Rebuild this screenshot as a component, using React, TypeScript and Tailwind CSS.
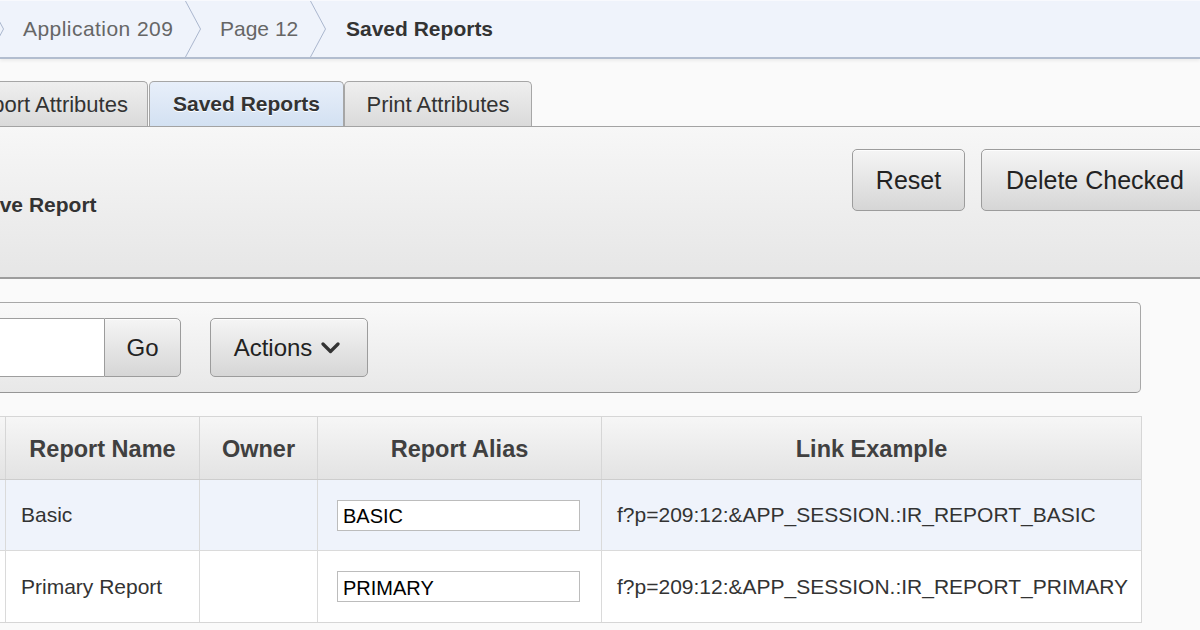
import React from 'react';

const Chevron = ({ className = '' }: { className?: string }) => (
  <svg className={className} width="16" height="57" viewBox="0 0 16 57" preserveAspectRatio="none" fill="none">
    <path d="M0.5 0 L15.5 28.5 L0.5 57" stroke="#a9b5cc" strokeWidth="1" />
  </svg>
);

const btn =
  'border border-[#9c9c9c] bg-linear-to-b from-[#f5f5f5] to-[#d6d6d6] text-[#222] shadow-[inset_0_1px_0_rgba(255,255,255,0.8)] flex items-center justify-center';

const rows = [
  { name: 'Basic', alias: 'BASIC', link: 'f?p=209:12:&APP_SESSION.:IR_REPORT_BASIC', bg: 'bg-[#eff3fb]' },
  { name: 'Primary Report', alias: 'PRIMARY', link: 'f?p=209:12:&APP_SESSION.:IR_REPORT_PRIMARY', bg: 'bg-white' },
];

export default function App() {
  return (
    <div className="w-[1200px] h-[630px] overflow-hidden bg-[#fafafa] font-['Liberation_Sans',Arial,sans-serif]">
      {/* Breadcrumb */}
      <div className="h-[59px] bg-[#eff3fb] border-t border-t-[#f8f9fd] border-b-2 border-b-[#b2bdcf] flex items-stretch shadow-[0_2px_3px_rgba(0,0,0,0.06)]">
        <Chevron className="ml-[-12px] shrink-0 h-full" />
        <div className="w-[181px] shrink-0 pl-[19px] flex items-center text-[21px] tracking-[0.45px] text-[#666]">Application 209</div>
        <Chevron className="shrink-0 h-full" />
        <div className="w-[109px] shrink-0 pl-[19px] flex items-center text-[21px] text-[#666]">Page 12</div>
        <Chevron className="shrink-0 h-full" />
        <div className="pl-[20px] flex items-center text-[21px] font-bold text-[#333]">Saved Reports</div>
      </div>

      {/* Tabs */}
      <div className="pt-[22px] flex items-end">
        <div className="ml-[-60px] w-[208px] h-[45px] shrink-0 rounded-t-[5px] border border-b-0 border-[#a6a6a6] bg-linear-to-b from-[#efefef] to-[#dadada] flex items-center justify-center pl-[4px] text-[22px] text-[#333] whitespace-nowrap">
          Report Attributes
        </div>
        <div className="ml-[1px] w-[195px] h-[45px] shrink-0 rounded-t-[5px] border border-b-0 border-[#a6a6a6] bg-linear-to-b from-[#e8effa] to-[#d3e1f2] flex items-center justify-center text-[21px] font-bold text-[#333] [text-shadow:0_1px_0_#fff]">
          Saved Reports
        </div>
        <div className="w-[188px] h-[45px] shrink-0 rounded-t-[5px] border border-b-0 border-[#a6a6a6] bg-linear-to-b from-[#efefef] to-[#dadada] flex items-center justify-center text-[22px] text-[#333]">
          Print Attributes
        </div>
      </div>

      {/* Region */}
      <div className="h-[153px] border-t border-t-[#a3a3a3] border-b-2 border-b-[#9d9d9d] bg-linear-to-b from-[#f7f7f7] to-[#e6e6e6] flex">
        <div className="ml-[-82px] pt-[6px] self-center text-[21px] font-bold text-[#333] whitespace-nowrap">Interactive Report</div>
        <div className="flex-1" />
        <div className="pt-[22px] mr-[-21px] flex items-start gap-[16px] shrink-0">
          <div className={`${btn} w-[113px] h-[62px] rounded-[5px] text-[25px] pt-[2px]`}>Reset</div>
          <div className={`${btn} w-[240px] h-[62px] rounded-[5px] text-[25px] !justify-start pl-[24px] pt-[2px] whitespace-nowrap`}>Delete Checked</div>
        </div>
      </div>

      {/* Search toolbar */}
      <div className="mt-[23px] ml-[-20px] w-[1161px] h-[91px] rounded-[5px] border border-[#a8a8a8] border-b-[#969696] bg-linear-to-b from-[#f9f9f9] to-[#e8e8e8] flex items-center">
        <input
          readOnly
          className="ml-[-133px] w-[256px] h-[59px] shrink-0 bg-white border border-[#9e9e9e] border-r-0 outline-none"
        />
        <div className={`${btn} w-[77px] h-[59px] shrink-0 rounded-r-[5px] text-[24px]`}>Go</div>
        <div className={`${btn} ml-[29px] w-[158px] h-[59px] shrink-0 rounded-[5px] text-[24px] gap-[9px] pr-[4px]`}>
          <span>Actions</span>
          <svg width="19" height="12" viewBox="0 0 19 12" fill="none">
            <path d="M2 2 L9.5 9.5 L17 2" stroke="#333" strokeWidth="3.2" strokeLinecap="round" strokeLinejoin="round" />
          </svg>
        </div>
      </div>

      {/* Table */}
      <div className="mt-[23px] ml-[-36px] w-[1178px] border border-[#d6d6d6] bg-white">
        <div className="grid grid-cols-[41px_194px_118px_284px_539px] h-[63px] border-b border-[#cdcdcd] bg-linear-to-b from-[#f6f6f6] to-[#e3e3e3] text-[23.5px] font-bold text-[#404040]">
          <div className="border-r border-[#d6d6d6]" />
          <div className="border-r border-[#d6d6d6] flex items-center justify-center pt-[3px]">Report Name</div>
          <div className="border-r border-[#d6d6d6] flex items-center justify-center pt-[3px]">Owner</div>
          <div className="border-r border-[#d6d6d6] flex items-center justify-center pt-[3px]">Report Alias</div>
          <div className="flex items-center justify-center pt-[3px]">Link Example</div>
        </div>
        {rows.map((r, i) => (
          <div
            key={r.alias}
            className={`grid grid-cols-[41px_194px_118px_284px_539px] h-[71px] ${i === 0 ? 'border-b border-[#dadada]' : ''} ${r.bg} text-[21px] text-[#333]`}
          >
            <div className="border-r border-[#dadada]" />
            <div className="border-r border-[#dadada] flex items-center pl-[15px] whitespace-nowrap">{r.name}</div>
            <div className="border-r border-[#dadada]" />
            <div className="border-r border-[#dadada] flex items-center pl-[19px]">
              <input
                readOnly
                value={r.alias}
                className="w-[243px] h-[31px] bg-white border border-[#bcbcbc] pl-[5px] pt-[3px] text-[20px] text-black outline-none"
              />
            </div>
            <div className="flex items-center pl-[15px] whitespace-nowrap">{r.link}</div>
          </div>
        ))}
      </div>
    </div>
  );
}
